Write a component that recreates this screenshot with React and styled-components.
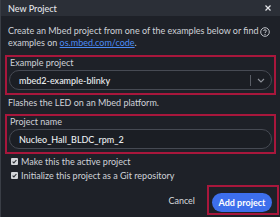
import React from "react";
import styled, { createGlobalStyle } from "styled-components";

const Global = createGlobalStyle`
  html, body { margin: 0; padding: 0; background: #1e2128; }
  body { font-family: Lato, "Noto Sans", sans-serif; }
  * { box-sizing: border-box; }
`;

const Dialog = styled.div`
  width: 280px;
  height: 217px;
  background: #1e2128;
  border-left: 1px solid #3a3e46;
  display: flex;
  flex-direction: column;
  overflow: hidden;
`;

const Header = styled.div`
  height: 16px;
  flex: none;
  background: #2b2f37;
  display: flex;
  align-items: center;
  justify-content: space-between;
  padding: 0 9px 0 7px;
`;

const Title = styled.span`
  color: #e4e6ea;
  font-size: 9px;
  font-weight: 500;
`;

const Body = styled.div`
  display: flex;
  flex-direction: column;
  padding: 9px 0 0 0;
`;

const IntroRow = styled.div`
  display: flex;
  justify-content: space-between;
  align-items: flex-start;
  padding: 0 10px 0 7px;
`;

const Text = styled.p`
  margin: 0;
  color: #cfd2d8;
  font-size: 9px;
  line-height: 12px;
`;

const Link = styled.a`
  color: #4c8df6;
  text-decoration: underline;
`;

const Field = styled.div`
  margin: ${(p) => p.$top}px 4px 0 4px;
  border: 2px solid #a8173c;
  padding: 0 2px 3px 2px;
  display: flex;
  flex-direction: column;
  gap: 1px;
`;

const Label = styled.span`
  color: #cfd2d8;
  font-size: 9px;
  line-height: 12px;
  padding-left: 1px;
`;

const InputBox = styled.div`
  height: 20px;
  border: 1px solid #464a53;
  border-radius: 10px;
  background: #1b1e24;
  display: flex;
  align-items: center;
  padding-left: 9px;
  color: #eceef1;
  font-size: 9px;
  font-weight: 500;
`;

const Value = styled.span`
  flex: 1;
`;

const Divider = styled.span`
  width: 1px;
  height: 11px;
  background: #5a5e66;
`;

const Chevron = styled.span`
  width: 20px;
  display: flex;
  justify-content: center;
  align-items: center;
`;

const Hint = styled(Text)`
  padding-left: 7px;
  margin-top: 2px;
`;

const Checks = styled.div`
  display: flex;
  flex-direction: column;
  padding-left: 10px;
`;

const CheckRow = styled.label`
  height: 14px;
  display: flex;
  align-items: center;
  gap: 3px;
  color: #cfd2d8;
  font-size: 9px;
`;

const Box = styled.span`
  width: 7px;
  height: 7px;
  background: #d3d5d9;
  border-radius: 1px;
  display: flex;
  align-items: center;
  justify-content: center;
`;

const Footer = styled.div`
  display: flex;
  justify-content: flex-end;
  align-items: center;
  margin-top: 3px;
  padding-right: 1px;
`;

const Cancel = styled.span`
  color: #d7d9dd;
  font-size: 9px;
  margin-right: 12px;
`;

const Highlight = styled.div`
  border: 2px solid #a8173c;
  padding: 3px 5px 1px 3px;
`;

const Primary = styled.button`
  height: 19px;
  width: 60px;
  border: none;
  border-radius: 10px;
  background: #3d6fec;
  color: #ffffff;
  font-family: Lato, "Noto Sans", sans-serif;
  font-size: 9px;
  font-weight: 700;
  padding: 0;
`;

const Check = () => (
  <Box>
    <svg width="5" height="5" viewBox="0 0 5 5">
      <path d="M0.6 2.6 L1.9 3.9 L4.4 1" stroke="#2a2d33" strokeWidth="1.1" fill="none" />
    </svg>
  </Box>
);

export default function App() {
  return (
    <>
      <Global />
      <Dialog>
        <Header>
          <Title>New Project</Title>
          <svg width="6" height="6" viewBox="0 0 6 6">
            <path d="M0.5 0.5 L5.5 5.5 M5.5 0.5 L0.5 5.5" stroke="#e4e6ea" strokeWidth="1.2" />
          </svg>
        </Header>
        <Body>
          <IntroRow>
            <Text>
              Create an Mbed project from one of the examples below or find
              <br />
              examples on <Link>os.mbed.com/code</Link>.
            </Text>
            <svg width="10" height="10" viewBox="0 0 10 10" style={{ marginTop: 2 }}>
              <circle cx="5" cy="5" r="4.3" stroke="#cfd2d8" strokeWidth="0.9" fill="none" />
              <path d="M3.6 3.9 C3.6 2.4 6.4 2.4 6.4 3.9 C6.4 4.9 5 4.9 5 6" stroke="#cfd2d8" strokeWidth="0.9" fill="none" />
              <circle cx="5" cy="7.4" r="0.55" fill="#cfd2d8" />
            </svg>
          </IntroRow>
          <Field $top={6}>
            <Label>Example project</Label>
            <InputBox>
              <Value>mbed2-example-blinky</Value>
              <Divider />
              <Chevron>
                <svg width="8" height="5" viewBox="0 0 8 5">
                  <path d="M1 1 L4 4 L7 1" stroke="#8e929a" strokeWidth="1.1" fill="none" />
                </svg>
              </Chevron>
            </InputBox>
          </Field>
          <Hint>Flashes the LED on an Mbed platform.</Hint>
          <Field $top={5}>
            <Label>Project name</Label>
            <InputBox>
              <Value>Nucleo_Hall_BLDC_rpm_2</Value>
            </InputBox>
          </Field>
          <Checks>
            <CheckRow>
              <Check />
              Make this the active project
            </CheckRow>
            <CheckRow>
              <Check />
              Initialize this project as a Git repository
            </CheckRow>
          </Checks>
          <Footer>
            <Cancel>Cancel</Cancel>
            <Highlight>
              <Primary>Add project</Primary>
            </Highlight>
          </Footer>
        </Body>
      </Dialog>
    </>
  );
}
